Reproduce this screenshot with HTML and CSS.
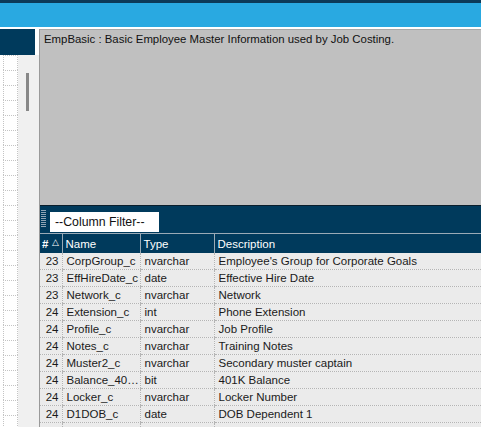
FILE: index.html
```html
<!DOCTYPE html>
<html>
<head>
<meta charset="utf-8">
<link rel="stylesheet" href="styles.css">
</head>
<body>
<div class="app">
  <div class="topbar"></div>
  <div class="ribbon"></div>
  <div class="gap"></div>
  <div class="main">
    <div class="left">
      <div class="left-head"></div>
      <div class="left-body">
        <div class="grid">
          <div class="cell"></div><div class="cell"></div><div class="cell"></div><div class="cell"></div>
          <div class="cell"></div><div class="cell"></div><div class="cell"></div><div class="cell"></div>
          <div class="cell"></div><div class="cell"></div><div class="cell"></div><div class="cell"></div>
          <div class="cell"></div><div class="cell"></div><div class="cell"></div><div class="cell"></div>
          <div class="cell"></div><div class="cell"></div><div class="cell"></div><div class="cell"></div>
          <div class="cell"></div><div class="cell"></div><div class="cell"></div><div class="cell"></div>
          <div class="cell"></div><div class="cell"></div>
        </div>
        <div class="strip"><div class="thumb"></div></div>
      </div>
    </div>
    <div class="content">
      <div class="info">EmpBasic : Basic Employee Master Information used by Job Costing.</div>
      <div class="filterbar">
        <div class="grip"></div>
        <div class="filterbox">--Column Filter--</div>
      </div>
      <table class="cols">
        <colgroup>
          <col class="c-num"><col class="c-name"><col class="c-type"><col class="c-desc">
        </colgroup>
        <thead>
          <tr>
            <th class="h-num"><span class="hash">#</span><span class="sort">&#9651;</span></th>
            <th>Name</th>
            <th>Type</th>
            <th>Description</th>
          </tr>
        </thead>
        <tbody>
          <tr><td class="num">23</td><td>CorpGroup_c</td><td>nvarchar</td><td>Employee's Group for Corporate Goals</td></tr>
          <tr><td class="num">23</td><td>EffHireDate_c</td><td>date</td><td>Effective Hire Date</td></tr>
          <tr><td class="num">23</td><td>Network_c</td><td>nvarchar</td><td>Network</td></tr>
          <tr><td class="num">24</td><td>Extension_c</td><td>int</td><td>Phone Extension</td></tr>
          <tr><td class="num">24</td><td>Profile_c</td><td>nvarchar</td><td>Job Profile</td></tr>
          <tr><td class="num">24</td><td>Notes_c</td><td>nvarchar</td><td>Training Notes</td></tr>
          <tr><td class="num">24</td><td>Muster2_c</td><td>nvarchar</td><td>Secondary muster captain</td></tr>
          <tr><td class="num">24</td><td>Balance_40…</td><td>bit</td><td>401K Balance</td></tr>
          <tr><td class="num">24</td><td>Locker_c</td><td>nvarchar</td><td>Locker Number</td></tr>
          <tr><td class="num">24</td><td>D1DOB_c</td><td>date</td><td>DOB Dependent 1</td></tr>
          <tr><td class="num">24</td><td></td><td></td><td></td></tr>
        </tbody>
      </table>
    </div>
  </div>
</div>
</body>
</html>
```

FILE: styles.css
```css
html, body {
  margin: 0;
  padding: 0;
  background: #ffffff;
}
.app {
  width: 481px;
  height: 427px;
  overflow: hidden;
  font-family: "Liberation Sans", Arial, sans-serif;
  color: #1a1a1a;
  display: flex;
  flex-direction: column;
}
.topbar {
  height: 3px;
  background: #0c3a58;
  flex: none;
}
.ribbon {
  height: 24px;
  background: #29a9e1;
  flex: none;
}
.gap {
  height: 2px;
  background: #ffffff;
  flex: none;
}
.main {
  flex: 1;
  display: flex;
  min-height: 0;
}
.left {
  width: 39px;
  flex: none;
  display: flex;
  flex-direction: column;
  background: #ffffff;
}
.left-head {
  width: 35px;
  height: 26px;
  background: #003a5c;
  flex: none;
}
.left-body {
  flex: 1;
  display: flex;
}
.grid {
  width: 18px;
  flex: none;
  background: #ffffff;
}
.cell {
  height: 14px;
  margin-left: 3px;
  border-top: 1px dotted #c4c4c4;
  border-left: 1px dotted #c4c4c4;
  border-right: 1px dotted #c4c4c4;
}
.strip {
  flex: 1;
  background: #f0f0f0;
  padding-top: 18px;
}
.thumb {
  width: 3px;
  height: 38px;
  margin-left: 8px;
  background: #888888;
}
.content {
  flex: 1;
  min-width: 0;
  border-left: 1px solid #9a9a9a;
  display: flex;
  flex-direction: column;
  background: #f0f0f0;
}
.info {
  height: 176px;
  flex: none;
  background: #c0c0c0;
  border-top: 1px solid #a8a8a8;
  padding: 3px 0 0 4px;
  box-sizing: border-box;
  font-size: 11.4px;
  line-height: 13px;
  color: #111111;
}
.filterbar {
  height: 28px;
  flex: none;
  background: #003a5c;
  border-top: 1px solid #0a1e2c;
  box-sizing: border-box;
  display: flex;
  align-items: flex-end;
  padding-bottom: 1px;
}
.grip {
  width: 5px;
  height: 17px;
  margin: 0 4px 1px 1px;
  background: repeating-linear-gradient(to bottom, #8fa4b4 0 1px, transparent 1px 2px);
  align-self: center;
}
.filterbox {
  width: 109px;
  height: 20px;
  background: #ffffff;
  font-size: 12.3px;
  line-height: 20px;
  padding-left: 5px;
  box-sizing: border-box;
  color: #111111;
}
.cols {
  border-collapse: collapse;
  table-layout: fixed;
  width: 100%;
  font-size: 11.5px;
}
.c-num { width: 22px; }
.c-name { width: 78px; }
.c-type { width: 74px; }
.cols thead tr {
  background: #003a5c;
  color: #ffffff;
}
.cols th {
  height: 19px;
  padding: 0 0 0 3px;
  text-align: left;
  font-weight: normal;
  border-top: 1px solid #9aaab6;
  border-left: 1px solid #9aaab6;
  white-space: nowrap;
  overflow: hidden;
}
.cols th.h-num {
  border-left: none;
  padding-left: 2px;
}
.hash {
  font-weight: bold;
}
.sort {
  font-size: 9px;
  margin-left: 4px;
  vertical-align: 3px;
}
.cols td {
  height: 16px;
  padding: 0 0 0 4px;
  background: #ebebeb;
  border-bottom: 1px dotted #b4b4b4;
  border-left: 1px dotted #b4b4b4;
  white-space: nowrap;
  overflow: hidden;
  line-height: 16px;
}
.cols td.num {
  text-align: right;
  padding: 0 3px 0 0;
  border-left: none;
}
```
